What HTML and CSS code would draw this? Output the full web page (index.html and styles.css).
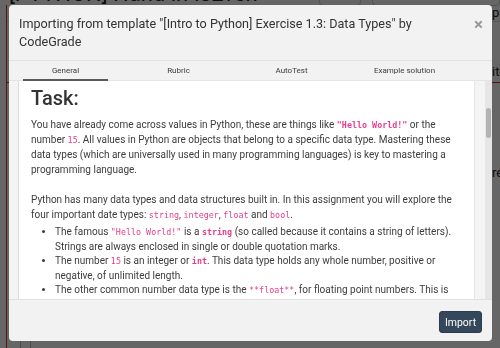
FILE: index.html
```html
<!DOCTYPE html>
<html lang="en">
<head>
    <meta charset="UTF-8">
    <meta name="viewport" content="width=device-width, initial-scale=1.0">
    <title>Import template</title>
    <link rel="stylesheet" href="styles.css">
</head>
<body>
    <div class="page">
        <div class="page-header">
            <h1 class="page-title">[PYTHON] Hand in IsEven</h1>
            <div class="page-actions">
                <span class="page-btn small"></span>
                <span class="page-btn"></span>
            </div>
        </div>
        <div class="page-card">
            <div class="page-row first"><span></span><span>p</span></div>
            <div class="page-row second"><span></span><span>ito</span></div>
            <div class="page-row tall"><span></span><span>re</span></div>
            <div class="page-cols"><span></span><span></span></div>
        </div>
    </div>

    <div class="backdrop">
        <div class="modal">
            <div class="modal-header">
                <h5 class="modal-title">Importing from template "[Intro to Python] Exercise 1.3: Data Types" by CodeGrade</h5>
                <span class="close">&times;</span>
            </div>

            <div class="tabs">
                <span class="tab active">General</span>
                <span class="tab">Rubric</span>
                <span class="tab">AutoTest</span>
                <span class="tab">Example solution</span>
            </div>

            <div class="modal-body">
                <div class="pane">
                    <h2>Task:</h2>
                    <p>You have already come across values in Python, these are things like <code class="b">"Hello World!"</code> or the number <code>15</code>. All values in Python are objects that belong to a specific data type. Mastering these data types (which are universally used in many programming languages) is key to mastering a programming language.</p>
                    <p class="lead-in">Python has many data types and data structures built in. In this assignment you will explore the four important date types: <code>string</code>, <code>integer</code>, <code>float</code> and <code>bool</code>.</p>
                    <ul>
                        <li>The famous <code>"Hello World!"</code> is a <strong><code>string</code></strong> (so called because it contains a string of letters). Strings are always enclosed in single or double quotation marks.</li>
                        <li>The number <code>15</code> is an integer or <strong><code>int</code></strong>. This data type holds any whole number, positive or negative, of unlimited length.</li>
                        <li>The other common number data type is the <code>**float**</code>, for floating point numbers. This is any number with a decimal point, like <code>3.14</code>.</li>
                        <li>The <strong><code>bool</code></strong> type holds only two values: <code>True</code> and <code>False</code>.</li>
                    </ul>
                </div>
                <div class="scrollbar">
                    <div class="thumb"></div>
                </div>
            </div>

            <div class="modal-footer">
                <button class="btn-import">Import</button>
            </div>
        </div>
    </div>
</body>
</html>
```

FILE: styles.css
```css
body {
    margin: 0;
    font-family: Roboto, "Liberation Sans", Arial, sans-serif;
    background: #fff;
    width: 500px;
    height: 348px;
    overflow: hidden;
}

/* page behind the dialog */
.page {
    padding: 0 0 0 6px;
    color: #222;
}
.page-header {
    display: flex;
    align-items: flex-start;
    height: 5px;
}
.page-title {
    margin: -17px 0 0 3px;
    font-size: 22px;
    font-weight: normal;
    line-height: 22px;
}
.page-actions {
    margin-left: auto;
    display: flex;
    gap: 11px;
    margin-top: -6px;
}
.page-btn {
    border: 1px solid #ccc;
    border-radius: 4px;
    height: 10px;
    width: 126px;
}
.page-btn.small {
    width: 40px;
}
.page-card {
    border-left: 1px solid #c0392b;
    height: 343px;
    display: flex;
    flex-direction: column;
    font-size: 13px;
}
.page-row {
    display: flex;
    justify-content: space-between;
    border-bottom: 1px solid #ddd;
}
.page-row span:last-child {
    width: 8px;
    overflow: hidden;
}
.page-row.first {
    height: 16px;
    line-height: 16px;
}
.page-row.second {
    height: 60px;
    line-height: 100px;
    border-bottom-color: #c0392b;
}
.page-row.tall {
    height: 100px;
    line-height: 180px;
    border-bottom: none;
}
.page-cols {
    flex: 1;
    display: flex;
    margin-left: 13px;
}
.page-cols span {
    width: 9px;
    border-left: 1px solid #bbb;
}

/* dialog */
.backdrop {
    position: fixed;
    inset: 0;
    background: rgba(0, 0, 0, 0.6);
    padding: 5px 8px 7px 9px;
    display: flex;
}
.modal {
    flex: 1;
    display: flex;
    flex-direction: column;
    background: #f2f2f2;
    border-radius: 4px;
    overflow: hidden;
    color: #3a3a3a;
}
.modal-header {
    display: flex;
    align-items: flex-start;
    justify-content: space-between;
    padding: 10px 9px 9px 10px;
    border-bottom: 1px solid #e2e2e2;
}
.modal-title {
    margin: 0;
    max-width: 400px;
    font-size: 12.6px;
    font-weight: normal;
    line-height: 18px;
    color: #333;
}
.close {
    font-size: 17px;
    font-weight: bold;
    color: #9a9a9a;
    line-height: 16px;
    margin-top: 1px;
}

.tabs {
    display: grid;
    grid-template-columns: repeat(4, 113px);
    height: 19px;
    border-bottom: 1px solid #e4e4e4;
}
.tab {
    text-align: center;
    font-size: 8px;
    line-height: 19px;
    color: #3c3c3c;
    margin: 0 14px;
}
.tab.active {
    border-bottom: 2px solid #5a5a5a;
    height: 18px;
}

.modal-body {
    height: 218px;
    display: flex;
    padding-left: 9px;
    background: #f4f4f4;
}
.pane {
    width: 432px;
    background: #fff;
    border-left: 1px solid #dcdcdc;
    border-right: 1px solid #e6e6e6;
    padding: 4px 12px 0 12px;
    overflow: hidden;
    font-size: 10px;
    line-height: 15px;
    color: #3c3c3c;
}
.pane h2 {
    margin: 0 0 6px;
    font-size: 20px;
    font-weight: 500;
    line-height: 26px;
    color: #333;
}
.pane p {
    margin: 0 0 15px;
}
.pane p.lead-in {
    margin-bottom: 3px;
}
.pane ul {
    margin: 0;
    padding-left: 24px;
}
.pane li {
    line-height: 14.5px;
}
code {
    font-family: "DejaVu Sans Mono", "Liberation Mono", monospace;
    font-size: 8.4px;
    line-height: 1;
    color: #e83e8c;
}
code.b,
strong code {
    font-weight: bold;
}
.scrollbar {
    margin-left: 10px;
    width: 7px;
    background: #e6e6e6;
    padding-top: 27px;
}
.thumb {
    width: 5px;
    height: 30px;
    margin: 0 auto;
    border-radius: 3px;
    background: #b3b3b3;
}

.modal-footer {
    flex: 1;
    display: flex;
    justify-content: flex-end;
    align-items: flex-start;
    padding: 11px 10px 0 0;
    border-top: 1px solid #e0e0e0;
}
.btn-import {
    background: #34475b;
    color: #fff;
    border: 1px solid #2c3d4e;
    border-radius: 3px;
    font-family: Roboto, "Liberation Sans", Arial, sans-serif;
    font-size: 10.5px;
    height: 22px;
    width: 43px;
    padding: 0;
}
```
